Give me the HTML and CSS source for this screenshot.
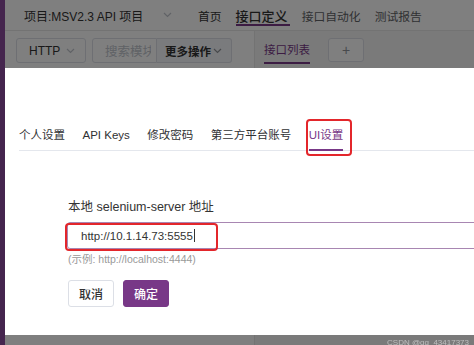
FILE: index.html
```html
<!DOCTYPE html>
<html lang="zh-CN">
<head>
    <meta charset="UTF-8">
    <title>MSV2.3 API 项目 - 接口定义</title>
    <link rel="stylesheet" href="styles.css">
</head>
<body>
    <div class="layout">
        <aside class="sidebar"></aside>
        <div class="main">
            <header class="topbar">
                <div class="project">
                    <span>项目:MSV2.3 API 项目</span>
                    <svg class="chev" width="9" height="6" viewBox="0 0 9 6"><polyline points="1,1 4.5,4.5 8,1" fill="none" stroke="#c0c4cc" stroke-width="1.2"/></svg>
                </div>
                <nav class="nav">
                    <a class="nav-item">首页</a>
                    <a class="nav-item active">接口定义</a>
                    <a class="nav-item muted">接口自动化</a>
                    <a class="nav-item muted">测试报告</a>
                </nav>
            </header>

            <div class="workspace">
                <div class="module-panel">
                    <div class="select-box">
                        <span>HTTP</span>
                        <svg class="chev" width="9" height="6" viewBox="0 0 9 6"><polyline points="1,1 4.5,4.5 8,1" fill="none" stroke="#c0c4cc" stroke-width="1.2"/></svg>
                    </div>
                    <div class="search-group">
                        <div class="search-box"><span class="search-text">搜索模块</span></div>
                        <div class="more-btn">
                            <span>更多操作</span>
                            <svg class="chev" width="9" height="6" viewBox="0 0 9 6"><polyline points="1,1 4.5,4.5 8,1" fill="none" stroke="#909399" stroke-width="1.2"/></svg>
                        </div>
                    </div>
                </div>
                <div class="api-panel">
                    <span class="api-tab">接口列表</span>
                    <span class="add-btn">+</span>
                </div>
            </div>
        </div>
    </div>

    <div class="mask"></div>

    <div class="dialog">
        <div class="tabs">
            <span class="tab">个人设置</span>
            <span class="tab">API Keys</span>
            <span class="tab">修改密码</span>
            <span class="tab">第三方平台账号</span>
            <span class="tab active">UI设置</span>
        </div>

        <div class="form">
            <div class="form-label">本地 selenium-server 地址</div>
            <div class="text-input">
                <span>http://10.1.14.73:5555</span><span class="caret"></span>
            </div>
            <div class="form-hint">(示例: http://localhost:4444)</div>
            <div class="form-actions">
                <button class="btn">取消</button>
                <button class="btn btn-primary">确定</button>
            </div>
        </div>

        <!-- red marks from the screenshot -->
        <div class="mark mark-tab"></div>
        <div class="mark mark-input"></div>
    </div>

    <div class="watermark">CSDN @qq_43417373</div>
</body>
</html>
```

FILE: styles.css
```css
* {
    margin: 0;
    padding: 0;
    box-sizing: border-box;
}

body {
    font-family: "Liberation Sans", "Noto Sans CJK SC", sans-serif;
    color: #333;
    background: #f5f5f5;
    height: 345px;
    overflow: hidden;
}

.layout {
    display: flex;
    height: 100vh;
}

.sidebar {
    width: 5px;
    background: #8a4a9c;
}

.main {
    flex: 1;
    display: flex;
    flex-direction: column;
}

/* top bar */
.topbar {
    height: 31px;
    display: flex;
    align-items: center;
    background: #fff;
    border-bottom: 1px solid #e6e6e6;
    padding-left: 19px;
}

.project {
    width: 161px;
    display: flex;
    align-items: center;
    font-size: 12px;
    color: #333;
}

.project .chev {
    margin-left: auto;
    margin-right: 13px;
}

.nav {
    display: flex;
    align-items: center;
    gap: 14px;
    margin-left: 13px;
    height: 100%;
}

.nav-item {
    font-size: 11.8px;
    color: #333;
    height: 100%;
    display: flex;
    align-items: center;
    position: relative;
}

.nav-item.active {
    font-size: 13px;
    font-weight: 500;
}

.nav-item.active::after {
    content: "";
    position: absolute;
    left: 0;
    right: -2px;
    bottom: 4px;
    height: 2px;
    background: #783887;
}

.nav-item.muted {
    color: #606266;
}

/* workspace */
.workspace {
    flex: 1;
    display: flex;
}

.module-panel {
    width: 250px;
    border-right: 1px solid #e6e6e6;
    background: #fff;
    display: flex;
    align-items: flex-start;
    gap: 6px;
    padding: 7px 0 0 11px;
}

.select-box {
    width: 70px;
    height: 25px;
    border: 1px solid #dcdfe6;
    border-radius: 3px;
    display: flex;
    align-items: center;
    justify-content: space-between;
    padding: 0 10px 0 12px;
    font-size: 12px;
    background: #fff;
}

.search-group {
    display: flex;
    height: 25px;
}

.search-box {
    width: 65px;
    border: 1px solid #dcdfe6;
    border-radius: 3px 0 0 3px;
    display: flex;
    align-items: center;
    padding-left: 12px;
    background: #fff;
}

.search-text {
    width: 46px;
    overflow: hidden;
    white-space: nowrap;
    font-size: 12.5px;
    color: #c0c4cc;
}

.more-btn {
    width: 75px;
    border: 1px solid #dcdfe6;
    border-left: none;
    border-radius: 0 3px 3px 0;
    display: flex;
    align-items: center;
    justify-content: space-between;
    padding: 0 9px 0 8px;
    font-size: 11.5px;
    font-weight: bold;
    background: #f5f7fa;
}

.api-panel {
    flex: 1;
    display: flex;
    align-items: flex-start;
    gap: 18px;
    padding: 7px 0 0 9px;
}

.api-tab {
    font-size: 11.5px;
    color: #783887;
    height: 26px;
    line-height: 25px;
    border-bottom: 2px solid #783887;
}

.add-btn {
    width: 36px;
    height: 24px;
    border: 1px solid #dcdfe6;
    border-radius: 3px;
    background: #fff;
    color: #909399;
    font-size: 14px;
    text-align: center;
    line-height: 22px;
}

/* overlay + dialog */
.mask {
    position: fixed;
    inset: 0;
    background: rgba(0, 0, 0, 0.5);
}

.dialog {
    position: fixed;
    top: 68px;
    left: 5px;
    width: 540px;
    height: 267px;
    background: #fff;
    padding: 52px 0 0 14px;
}

.tabs {
    display: flex;
    gap: 17.5px;
    border-bottom: 1px solid #e4e7ed;
    height: 31px;
}

.tab {
    font-size: 11.5px;
    color: #303133;
    line-height: 30px;
    position: relative;
}

.tab.active {
    color: #783887;
}

.tab.active::after {
    content: "";
    position: absolute;
    left: 0;
    right: 0;
    bottom: -1px;
    height: 2px;
    background: #783887;
}

.form {
    margin: 46px 0 0 48px;
}

.form-label {
    font-size: 12.5px;
    line-height: 20px;
    color: #333;
    padding-left: 1px;
}

.text-input {
    margin-top: 5px;
    height: 27px;
    border: 1px solid #a886b2;
    border-radius: 3px;
    display: flex;
    align-items: center;
    padding-left: 13px;
    font-size: 11.5px;
    color: #333;
}

.caret {
    width: 1px;
    height: 13px;
    background: #333;
    margin-left: 1px;
}

.form-hint {
    margin-top: 2px;
    font-size: 10.5px;
    line-height: 16px;
    color: #999;
    padding-left: 1px;
}

.form-actions {
    display: flex;
    gap: 9px;
    margin-top: 13px;
    padding-left: 1px;
}

.btn {
    width: 46px;
    height: 27px;
    border: 1px solid #dcdfe6;
    border-radius: 3px;
    background: #fff;
    color: #333;
    font-family: inherit;
    font-size: 12px;
    font-weight: 500;
}

.btn-primary {
    background: #783887;
    border-color: #783887;
    color: #fff;
}

.mark {
    position: absolute;
    border: 2px solid #e3262b;
    border-radius: 4px;
}

.mark-tab {
    left: 301px;
    top: 51px;
    width: 46px;
    height: 37px;
}

.mark-input {
    left: 60px;
    top: 155px;
    width: 153px;
    height: 28px;
}

.watermark {
    position: fixed;
    right: 5px;
    bottom: -2px;
    font-size: 8px;
    color: rgba(255, 255, 255, 0.5);
}
```
